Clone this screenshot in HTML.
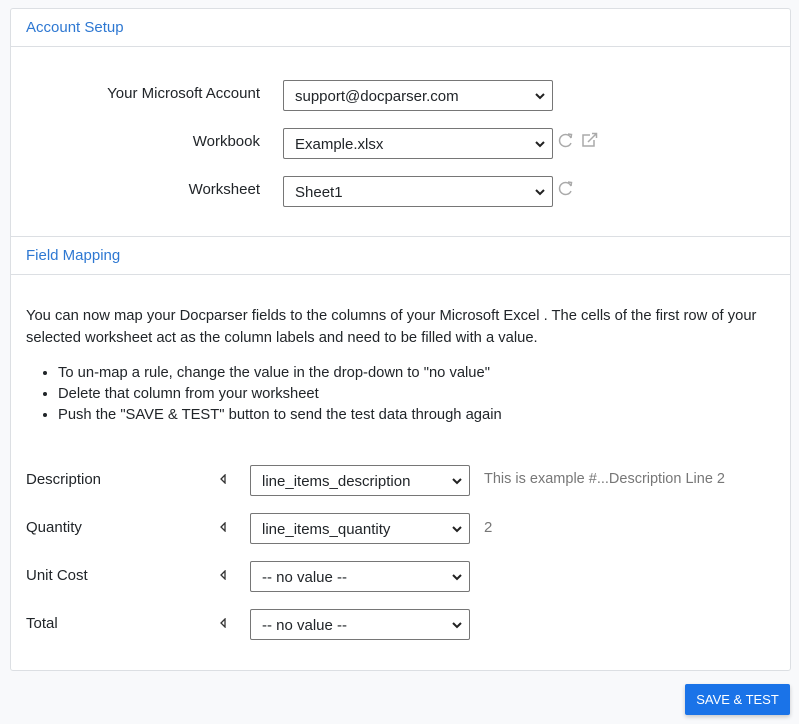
<!DOCTYPE html>
<html><head><style>
body{margin:0;width:799px;height:724px;background:#f8f9fb;font-family:"Liberation Sans",sans-serif;font-size:15px;color:#212529;position:relative;overflow:hidden}
.a{position:absolute;white-space:nowrap}
.card{position:absolute;left:10px;top:8px;width:779px;height:661px;background:#fff;border:1px solid #dcdfe3;border-radius:3px}
.hl{position:absolute;left:11px;width:779px;height:1px;background:#dcdfe3}
.h{color:#2e78d2;font-size:15px}
.sel{position:absolute;border:1px solid #767676;border-radius:2px;background:#fff;box-sizing:border-box;height:31px;padding:0 0 0 11px;line-height:31px;font-size:15px;color:#212529}
.sel svg{position:absolute;right:7px;top:12px}
.lbl{text-align:right;width:240px}
.g{color:#777}
.ic{position:absolute}
</style></head><body>
<div class="card"></div>
<div class="a h" style="left:26px;top:19px">Account Setup</div>
<div class="hl" style="top:46px"></div>
<div class="a lbl" style="left:20px;top:85px">Your Microsoft Account</div>
<div class="a lbl" style="left:20px;top:133px">Workbook</div>
<div class="a lbl" style="left:20px;top:181px">Worksheet</div>
<div class="sel" style="left:283px;top:80px;width:270px">support@docparser.com<svg width="10" height="7"><path d="M1 1l4 4 4-4" stroke="#222" stroke-width="2" fill="none"/></svg></div>
<div class="sel" style="left:283px;top:128px;width:270px">Example.xlsx<svg width="10" height="7"><path d="M1 1l4 4 4-4" stroke="#222" stroke-width="2" fill="none"/></svg></div>
<div class="sel" style="left:283px;top:176px;width:270px">Sheet1<svg width="10" height="7"><path d="M1 1l4 4 4-4" stroke="#222" stroke-width="2" fill="none"/></svg></div>
<svg class="ic" style="left:558px;top:132px" width="16" height="16"><path d="M13 6A6 6 0 1 0 13 11" stroke="#aaa" stroke-width="1.5" fill="none"/><path d="M10 2l3.5 0.5L13 6" stroke="#aaa" stroke-width="1.5" fill="none"/></svg>
<svg class="ic" style="left:581px;top:132px" width="17" height="16"><path d="M9 3H2v11h11V8" stroke="#aaa" stroke-width="1.5" fill="none"/><path d="M7 10L15 2M11 1.5h4.5v4.5" stroke="#aaa" stroke-width="1.5" fill="none"/></svg>
<svg class="ic" style="left:558px;top:180px" width="16" height="16"><path d="M13 6A6 6 0 1 0 13 11" stroke="#aaa" stroke-width="1.5" fill="none"/><path d="M10 2l3.5 0.5L13 6" stroke="#aaa" stroke-width="1.5" fill="none"/></svg>
<div class="hl" style="top:236px"></div>
<div class="a h" style="left:26px;top:247px">Field Mapping</div>
<div class="hl" style="top:274px"></div>
<div class="a" style="left:26px;top:305px;line-height:22px;white-space:normal;width:755px;font-size:14.75px">You can now map your Docparser fields to the columns of your Microsoft Excel . The cells of the first row of your selected worksheet act as the column labels and need to be filled with a value.</div>
<ul class="a" style="left:18px;top:363px;margin:0;padding-left:40px;line-height:21px;white-space:normal;font-size:14.75px">
<li>To un-map a rule, change the value in the drop-down to "no value"</li>
<li>Delete that column from your worksheet</li>
<li>Push the "SAVE &amp; TEST" button to send the test data through again</li>
</ul>
<div class="a" style="left:26px;top:471px">Description</div>
<div class="a" style="left:26px;top:519px">Quantity</div>
<div class="a" style="left:26px;top:567px">Unit Cost</div>
<div class="a" style="left:26px;top:615px">Total</div>
<svg class="ic" style="left:219px;top:474px" width="8" height="10"><path d="M6 1L2 5l4 4z" stroke="#333" stroke-width="1.3" fill="none"/></svg>
<svg class="ic" style="left:219px;top:522px" width="8" height="10"><path d="M6 1L2 5l4 4z" stroke="#333" stroke-width="1.3" fill="none"/></svg>
<svg class="ic" style="left:219px;top:570px" width="8" height="10"><path d="M6 1L2 5l4 4z" stroke="#333" stroke-width="1.3" fill="none"/></svg>
<svg class="ic" style="left:219px;top:618px" width="8" height="10"><path d="M6 1L2 5l4 4z" stroke="#333" stroke-width="1.3" fill="none"/></svg>
<div class="sel" style="left:250px;top:465px;width:220px">line_items_description<svg width="10" height="7"><path d="M1 1l4 4 4-4" stroke="#222" stroke-width="2" fill="none"/></svg></div>
<div class="sel" style="left:250px;top:513px;width:220px">line_items_quantity<svg width="10" height="7"><path d="M1 1l4 4 4-4" stroke="#222" stroke-width="2" fill="none"/></svg></div>
<div class="sel" style="left:250px;top:561px;width:220px">-- no value --<svg width="10" height="7"><path d="M1 1l4 4 4-4" stroke="#222" stroke-width="2" fill="none"/></svg></div>
<div class="sel" style="left:250px;top:609px;width:220px">-- no value --<svg width="10" height="7"><path d="M1 1l4 4 4-4" stroke="#222" stroke-width="2" fill="none"/></svg></div>
<div class="a g" style="left:484px;top:471px;font-size:14.5px">This is example #...Description Line 2</div>
<div class="a g" style="left:484px;top:519px">2</div>
<div class="a" style="left:685px;top:684px;width:105px;height:31px;background:#1a73e8;color:#fff;border-radius:2px;text-align:center;line-height:32px;font-size:13px;box-shadow:0 2px 4px rgba(0,0,0,.2)">SAVE &amp; TEST</div>
</body></html>
